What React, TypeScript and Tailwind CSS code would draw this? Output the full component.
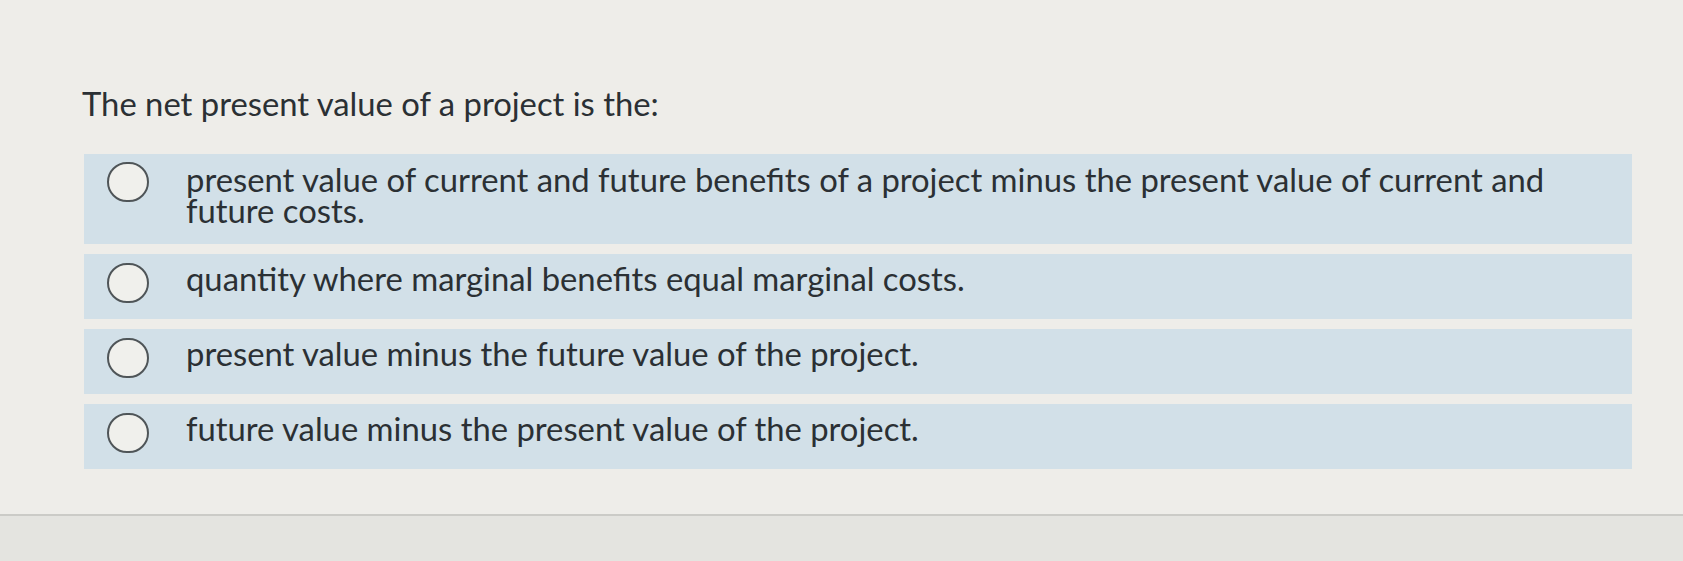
const OPTIONS = [
  'present value of current and future benefits of a project minus the present value of current and future costs.',
  'quantity where marginal benefits equal marginal costs.',
  'present value minus the future value of the project.',
  'future value minus the present value of the project.',
]

function Radio({ className = '' }: { className?: string }) {
  return (
    <span
      className={`block h-[40px] w-[42px] shrink-0 rounded-full border-2 border-[#4f5558] bg-[#f0f0ec] ${className}`}
    />
  )
}

export default function App() {
  return (
    <div className="h-[561px] w-[1683px] overflow-hidden bg-[#eeede9] font-['Lato','Liberation_Sans',sans-serif] text-[#2b3034]">
      <div className="flex h-[516px] flex-col border-b-2 border-[#cbcbc7] pl-[82px] pt-[84px]">
        <h1 className="text-[32.8px] font-normal leading-[40px]">The net present value of a project is the:</h1>

        <div className="mt-[30px] ml-[2px] flex w-[1548px] flex-col gap-[10px]">
          {/* first answer wraps onto two lines */}
          <div className="flex h-[90px] items-start bg-[#d2e0e8] pl-[23px]">
            <Radio className="mt-[8px]" />
            <p className="ml-[37px] pt-[10px] text-[32.8px] leading-[31px] whitespace-nowrap">
              present value of current and future benefits of a project minus the present value of current and
              <br />
              future costs.
            </p>
          </div>
          {OPTIONS.slice(1).map(opt => (
            <div key={opt} className="flex h-[65px] items-center bg-[#d2e0e8] pl-[23px]">
              <Radio className="mb-[8px]" />
              <p className="ml-[37px] pb-[15px] text-[32.8px] leading-[30px]">{opt}</p>
            </div>
          ))}
        </div>
      </div>
      <div className="h-[45px] bg-[#e4e4e0]" />
    </div>
  )
}
